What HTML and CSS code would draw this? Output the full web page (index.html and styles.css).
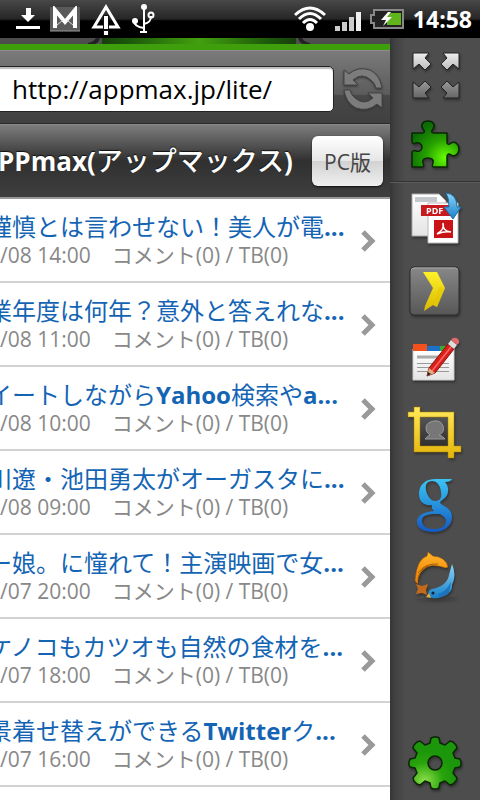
FILE: index.html
```html
<!DOCTYPE html>
<html lang="ja">
<head>
<meta charset="utf-8">
<meta name="viewport" content="width=device-width, initial-scale=1">
<title>APPmax</title>
<link rel="stylesheet" href="styles.css">
</head>
<body>
<svg class="defs" width="0" height="0" aria-hidden="true">
  <defs>
    <linearGradient id="silver" x1="0" y1="0" x2="0" y2="1"><stop offset="0" stop-color="#eee"/><stop offset="1" stop-color="#bbb"/></linearGradient>
    <linearGradient id="steel" x1="0" y1="0" x2="0" y2="1"><stop offset="0" stop-color="#666"/><stop offset="1" stop-color="#999"/></linearGradient>
    <radialGradient id="leaf" cx=".7" cy=".8" r=".8"><stop offset="0" stop-color="#6f0"/><stop offset=".5" stop-color="#27a000"/><stop offset="1" stop-color="#0b6b05"/></radialGradient>
    <radialGradient id="gear" cx=".3" cy=".85" r=".6"><stop offset="0" stop-color="#8ee04a"/><stop offset=".6" stop-color="#28a30c"/><stop offset="1" stop-color="#1c960a"/></radialGradient>
    <linearGradient id="tile" x1="0" y1="0" x2="0" y2="1"><stop offset="0" stop-color="#888"/><stop offset="1" stop-color="#575757"/></linearGradient>
    <linearGradient id="yellow" x1="0" y1="0" x2="0" y2="1"><stop offset="0" stop-color="#fff12a"/><stop offset="1" stop-color="#d9b800"/></linearGradient>
    <linearGradient id="gold" x1="0" y1="0" x2="0" y2="1"><stop offset="0" stop-color="#ffe95a"/><stop offset="1" stop-color="#e3b40c"/></linearGradient>
    <linearGradient id="azure" gradientUnits="userSpaceOnUse" x1="0" y1="0" x2="0" y2="53"><stop offset="0" stop-color="#3cc4f5"/><stop offset=".5" stop-color="#2590dc"/><stop offset="1" stop-color="#1658c0"/></linearGradient>
    <linearGradient id="sky" x1="0" y1="0" x2="0" y2="1"><stop offset="0" stop-color="#8fd4f7"/><stop offset="1" stop-color="#1580c8"/></linearGradient>
    <linearGradient id="amber" x1="0" y1="0" x2="0" y2="1"><stop offset="0" stop-color="#ffb52a"/><stop offset="1" stop-color="#f07c00"/></linearGradient>
    <linearGradient id="paper" x1="0" y1="0" x2="0" y2="1"><stop offset="0" stop-color="#fff"/><stop offset="1" stop-color="#e4e4e4"/></linearGradient>
    <linearGradient id="photo" x1="0" y1="0" x2="0" y2="1"><stop offset="0" stop-color="#555"/><stop offset="1" stop-color="#2e2e2e"/></linearGradient>
  </defs>
</svg>

<header class="status">
  <svg width="24" height="22" viewBox="0 0 24 22"><path fill="#fff" d="M10 0h5v7h4l-7 7-7-7h5zM0 18h24v3H0z"/></svg>
  <svg width="32" height="26" viewBox="0 0 32 26"><rect x="1" y="1" width="30" height="24" fill="#5a5a5a"/><path d="M1 25h30" stroke="#999"/><path d="M6 22V4l10 12L26 4v18" fill="none" stroke="#fff" stroke-width="4"/><path d="M8 19l6-5M24 19l-6-5" stroke="#ddd"/></svg>
  <svg width="32" height="32" viewBox="0 0 32 32"><path d="M16 4 28 24H4z" fill="none" stroke="#fff" stroke-width="3"/><path d="M16 12v20" stroke="#111" stroke-width="6"/><path d="M16 13v13M16 28v4" stroke="#fff" stroke-width="4"/></svg>
  <svg width="24" height="30" viewBox="0 0 24 30"><g fill="none" stroke="#fff" stroke-width="2"><path d="M13 3v24M3 17c0 4 3 6 10 7M20 12c0 5-2 7-7 8"/><circle cx="20" cy="11" r="2.500"/><path d="M9 28h7"/></g><circle cx="13" cy="3" r="3" fill="#fff"/><circle cx="4" cy="17" r="3" fill="#fff"/></svg>
  <svg class="push" width="32" height="26" viewBox="0 0 32 26"><g fill="none" stroke="#fff" stroke-width="3"><path d="M1 9Q16-5 31 9M5 13Q16 2 27 13M9 17Q16 10 23 17"/></g><circle cx="16" cy="21" r="4" fill="#fff"/></svg>
  <svg class="signal" width="26" height="20" viewBox="0 0 26 20"><path fill="#ccc" d="M0 15h5v5H0zM7 11h5v9H7zM14 6h5v14h-5z"/><path fill="#eee" d="M21 1h5v19h-5z"/></svg>
  <svg width="34" height="20" viewBox="0 0 34 20"><path d="M4 1h29v18H4v-5H1V6h3z" fill="#222" stroke="#888" stroke-width="2"/><path d="M17 4h14v12H17z" fill="#5fb51b"/><path d="m18 3-7 8h5l-3 6 9-9h-5l4-5z" fill="#fff"/></svg>
  <time>14:58</time>
</header>

<div class="screen">
  <main class="page">
    <div class="glow"><svg width="14" height="6" viewBox="0 0 14 6"><path d="M0 6Q7 5 9 0M5 6q5-2 6-6" fill="none" stroke="#222" stroke-width="2"/></svg><span></span><svg width="14" height="6" viewBox="0 0 14 6"><path d="M14 6Q7 5 5 0M9 6Q4 4 3 0" fill="none" stroke="#222" stroke-width="2"/></svg></div>
    <form class="address">
      <input type="text" aria-label="URL" value="http://appmax.jp/lite/">
      <button type="button" class="reload" aria-label="再読み込み">
        <svg width="42" height="42" viewBox="0 0 42 42"><g fill="#7c7c7c" stroke="#444"><path d="M2 2v15h14l-5-5q9-8 18 0 4 3 5 8h6Q38 7 28 2 16-2 7 6z"/><path d="M40 40V25H26l5 5q-9 8-18 0-4-3-5-8H2q2 13 12 18 12 4 21-4z"/></g></svg>
      </button>
    </form>
    <div class="title">
      <h1>PPmax(<span class="kana">アップマックス</span>)</h1>
      <button type="button" class="pc">PC版</button>
    </div>
    <ul class="list">
      <li><a href="#"><span class="text"><span class="name">謹慎とは言わせない！美人が電<b>...</b></span><span class="meta">/08 14:00　コメント(0) / TB(0)</span></span><svg width="16" height="24" viewBox="0 0 16 24"><path d="m3 3 9 9-9 9"/></svg></a></li>
      <li><a href="#"><span class="text"><span class="name">業年度は何年？意外と答えれな<b>...</b></span><span class="meta">/08 11:00　コメント(0) / TB(0)</span></span><svg width="16" height="24" viewBox="0 0 16 24"><path d="m3 3 9 9-9 9"/></svg></a></li>
      <li><a href="#"><span class="text"><span class="name">イートしながら<b>Yahoo</b>検索や<b>a...</b></span><span class="meta">/08 10:00　コメント(0) / TB(0)</span></span><svg width="16" height="24" viewBox="0 0 16 24"><path d="m3 3 9 9-9 9"/></svg></a></li>
      <li><a href="#"><span class="text"><span class="name">川遼・池田勇太がオーガスタに<b>...</b></span><span class="meta">/08 09:00　コメント(0) / TB(0)</span></span><svg width="16" height="24" viewBox="0 0 16 24"><path d="m3 3 9 9-9 9"/></svg></a></li>
      <li><a href="#"><span class="text"><span class="name">ー娘。に憧れて！主演映画で女<b>...</b></span><span class="meta">/07 20:00　コメント(0) / TB(0)</span></span><svg width="16" height="24" viewBox="0 0 16 24"><path d="m3 3 9 9-9 9"/></svg></a></li>
      <li><a href="#"><span class="text"><span class="name">ケノコもカツオも自然の食材を<b>...</b></span><span class="meta">/07 18:00　コメント(0) / TB(0)</span></span><svg width="16" height="24" viewBox="0 0 16 24"><path d="m3 3 9 9-9 9"/></svg></a></li>
      <li><a href="#"><span class="text"><span class="name">景着せ替えができる<b>Twitter</b>ク<b>...</b></span><span class="meta">/07 16:00　コメント(0) / TB(0)</span></span><svg width="16" height="24" viewBox="0 0 16 24"><path d="m3 3 9 9-9 9"/></svg></a></li>
    </ul>
  </main>

  <aside class="tools">
    <div class="group top">
      <button type="button" aria-label="全画面">
        <svg viewBox="0 0 54 54"><g stroke="#222" stroke-linejoin="round"><path fill="url(#silver)" d="M5 4h16l-4 5 6 6-6 6-6-6-6 5z"/><path fill="url(#silver)" transform="translate(56 0) scale(-1 1)" d="M5 4h16l-4 5 6 6-6 6-6-6-6 5z"/><path fill="url(#steel)" transform="translate(0 53) scale(1 -1)" d="M5 4h16l-4 5 6 6-6 6-6-6-6 5z"/><path fill="url(#steel)" transform="translate(56 53) scale(-1 -1)" d="M5 4h16l-4 5 6 6-6 6-6-6-6 5z"/></g></svg>
      </button>
      <button type="button" aria-label="アドオン">
        <svg viewBox="0 0 54 54"><path fill="url(#leaf)" stroke="#0a2605" stroke-width="1.500" stroke-linejoin="round" d="M4 15h10c3 0 3-2 1-4-3-4 0-8 5-8s8 4 5 8c-2 2-2 4 1 4h13v9c0 3 2 3 4 1 4-2 8 1 8 6s-4 8-8 6c-2-2-4-1-4 2v10H26c-2 0-2-2-1-4 1-3-1-5-5-5s-6 2-5 5c1 2 1 4-1 4H4V35c0-2 2-3 4-2 4 1 6-1 6-4s-3-5-6-4c-2 1-4 1-4-2z"/></svg>
      </button>
    </div>
    <div class="group">
      <button type="button" aria-label="PDF">
        <svg viewBox="0 0 54 54"><path d="M4 3h27l7 7v35H4z" fill="url(#paper)" stroke="#aaa"/><path d="M7 6h22v5H7z" fill="#c4c8cc"/><path d="M20 12h30v40H20z" fill="#fff" stroke="#bbb"/><path d="M13 14h30v11H13z" fill="#c81a1e"/><text x="18" y="23" class="tiny">PDF</text><path d="M26 29h19v18H26z" fill="#c91317"/><path d="M29 43q8-5 6-11-1 8 8 9-7-1-14 2z" fill="none" stroke="#fff" stroke-width="1.500"/><path d="M38 2q11 1 11 14h4l-8 12-9-12h5q0-9-3-14z" fill="url(#sky)" stroke="#1672ad"/></svg>
      </button>
      <button type="button" aria-label="進む">
        <svg viewBox="0 0 54 54"><rect x="2" y="4" width="49" height="48" rx="4" fill="url(#tile)" stroke="#2d2d2d"/><path d="M3 7q1-2 4-2h40q2 0 3 2" fill="none" stroke="#aaa"/><path d="M15 9h14l8 16-8 19-4-2-9 6 1-5 8-18z" fill="url(#yellow)"/><path d="m31 24 6 1-8 19-4-2z" fill="#e4c500" opacity=".5"/></svg>
      </button>
      <button type="button" aria-label="メモ">
        <svg viewBox="0 0 54 54"><path d="M5 14h41v31H5z" fill="url(#paper)" stroke="#ccc"/><path d="M5 9h14v7H5z" fill="#f2511b"/><path d="M19 11h13v5H19z" fill="#1d70c8"/><path d="M32 11h8v5h-8z" fill="#3caa28"/><path d="M9 22h29" stroke="#aaa" stroke-width="3"/><path d="M9 28.500h32M9 32.500h32M9 36.500h32" stroke="#999"/><path d="m19 41 2-8 19-24 6 5-19 24z" fill="#d8201a" stroke="#8a0d0a"/><path d="m24 36 19-24" stroke="#f66" stroke-width="1.500"/><path d="m19 41 2-8 6 5z" fill="#e0b080"/><path d="m19 41 1-4 3 2z" fill="#222"/><path d="m40 9 3-4 6 5-3 4z" fill="#ddd"/><path d="m43 5 2-2q3-1 5 1t1 4l-2 2z" fill="#e06a6a"/></svg>
      </button>
      <button type="button" aria-label="切り抜き">
        <svg viewBox="0 0 54 54"><path d="M11 9h30v31H11z" fill="url(#photo)"/><path d="M17 32q2-3 5-4-5-3-4-8t8-6 9 5-4 9q4 1 6 4z" fill="#777" stroke="#999"/><path fill="url(#gold)" fill-rule="evenodd" stroke="#a98300" stroke-width=".5" d="M6 0h6v5h34v34h7v6h-7v6h-6v-6H6V10H0V5h6zM12 10v29h28V10z"/></svg>
      </button>
      <button type="button" aria-label="Google">
        <svg viewBox="0 0 54 54"><path fill="url(#azure)" fill-rule="evenodd" d="M44 0c-1 2-3 3-7 3q4 4 3 9c0 5-4 8-7 10-2 2 0 3 3 5 4 2 8 5 8 11 0 9-8 15-19 15-10 0-16-4-16-10 0-7 7-10 17-11q-3-2-2-6c-9 1-13-4-13-11C11 6 17 0 28 0zM24 2c-5 0-7 4-6 9 1 6 5 11 9 11 5 0 7-3 6-9-1-7-4-11-9-11zm3 33c-9 0-13 2-13 7s5 8 12 8 12-3 12-8c0-3-3-5-6-7z"/></svg>
      </button>
      <button type="button" aria-label="Dolphin">
        <svg viewBox="0 0 54 54"><path d="M5 49q26-5 46-3-15 5-32 3z" fill="#3d3d3d" opacity=".5"/><path d="M7 29Q9 8 19 5l1-4 5 4q13 1 15 11l-2 1Q22 11 15 19q-6 5-5 14-3-2-3-4z" fill="url(#amber)" stroke="#9c5500" stroke-width=".5"/><path d="M10 22q7-10 20-9M10 27q3-10 10-12" fill="none" stroke="#a65e00"/><path d="m8 33 6 2 6-2-2 6 1 5-5-2-6 1 2-5z" fill="#c26a1c"/><path d="M44 13q5 11 0 21 1 7-8 11-9 4-14 1-4-6 2-8 15-3 17-14z" fill="url(#sky)"/><path d="M30 43q8-2 13-12-1 8-3 12-4 3-9 3z" fill="#1c74bd"/><circle cx="25" cy="42" r="1.500" fill="#123"/><path d="m21 42-3 4 5 1z" fill="#e2b23c"/></svg>
      </button>
    </div>
    <button type="button" class="settings" aria-label="設定">
      <svg viewBox="0 0 54 54"><path fill="url(#gear)" fill-rule="evenodd" stroke="#0c2506" stroke-width="1.500" stroke-linejoin="round" d="m22 7 1-5 3-1h3l2 1 1 5 5 2 5-4 3 1 3 3 1 3-4 5 2 5 5 1 1 3v3l-1 2-5 1-2 5 4 5-1 3-3 3-3 1-5-4-5 2-1 5-2 1h-3l-3-1-1-5-5-2-5 4-3-1-3-3-1-3 4-5-2-5-5-1-1-2v-3l1-3 5-1 2-5-4-5 1-3 3-3 3-1 5 4zM27 20a7 7 0 1 0 0 14 7 7 0 0 0 0-14z"/></svg>
    </button>
  </aside>
</div>
</body>
</html>
```
FILE: styles.css
```css
* { box-sizing: border-box; }

body {
  margin: 0;
  height: 100vh;
  display: flex;
  flex-direction: column;
  overflow: hidden;
  background: #4d4d4d;
  font-family: "Open Sans", "Noto Sans CJK JP", sans-serif;
}

svg { display: block; flex: none; }
.defs { position: absolute; }
button { padding: 0; border: 0; background: none; }

.status {
  flex: none;
  height: 38px;
  display: flex;
  align-items: center;
  gap: 9px;
  padding: 0 8px 0 16px;
  background: linear-gradient(#484848, #262626 50%, #000 55%, #000);
  color: #fff;
}
.status .push { margin-left: auto; }
.status .signal { align-self: flex-end; margin-bottom: 7px; }
.status time { font-size: 23px; font-weight: 700; line-height: 38px; }

.screen { flex: 1; min-height: 0; display: flex; }

.page { flex: 1; min-width: 0; overflow: hidden; background: #fff; }

.glow {
  display: flex;
  padding-left: 88px;
  background: #4d4d4d;
  border-bottom: 6px solid #3f9e0c;
  height: 12px;
}
.glow span {
  width: 194px;
  background: linear-gradient(90deg, #173f0c, #1c5a0b 15%, #44a00e 50%, #1c5a0b 85%, #173f0c);
}

.address {
  display: flex;
  align-items: center;
  gap: 8px;
  height: 74px;
  padding: 4px 6px 0 0;
  background: linear-gradient(#7a7a7a, #5c5c5c 60%, #484848 62%, #404040);
  border-top: 1px solid #8c8c8c;
  border-bottom: 1px solid #2b2b2b;
}
.address input {
  flex: 1;
  min-width: 0;
  height: 46px;
  margin-left: -8px;
  padding: 0 8px 0 19px;
  border: 1px solid #222;
  border-radius: 5px;
  background: #fff;
  box-shadow: inset 0 2px 1px #bbb;
  font: 26px/44px "Open Sans", sans-serif;
  color: #000;
}
.address .reload { filter: drop-shadow(0 1px 1px #333); }

.title {
  display: flex;
  align-items: center;
  justify-content: space-between;
  height: 75px;
  padding-right: 7px;
  background: linear-gradient(#7d7d7d, #303030 50%, #3f3f3f);
  border-top: 1px solid #888;
  border-bottom: 2px solid #999;
}
.title h1 {
  margin: 0 0 0 -2px;
  font-size: 26px;
  line-height: 40px;
  font-weight: 700;
  color: #fff;
  text-shadow: 0 -1px 1px #111;
  white-space: nowrap;
}
.title .kana { font-size: 27px; font-weight: 500; }
.title .pc {
  width: 71px;
  height: 50px;
  border-radius: 6px;
  background: linear-gradient(#fff, #e6e6e6 50%, #d2d2d2 51%, #efefef);
  box-shadow: 0 1px 2px #111;
  font: 21px "Open Sans", "Noto Sans CJK JP", sans-serif;
  color: #444;
}

.list { margin: 0; padding: 0; list-style: none; }
.list li { border-bottom: 2px solid #d2d2d2; }
.list a {
  display: flex;
  align-items: center;
  justify-content: space-between;
  height: 82px;
  padding: 2px 14px 0 0;
  text-decoration: none;
  white-space: nowrap;
}
.name, .meta { display: block; line-height: 28px; }
.name { margin-left: -12px; font-size: 24px; color: #1464b4; }
.meta { font-size: 21px; color: #888; }
.list path { fill: none; stroke: #999; stroke-width: 5; }

.tools {
  flex: none;
  width: 90px;
  display: flex;
  flex-direction: column;
  align-items: center;
  padding-bottom: 10px;
  background: linear-gradient(90deg, #353535, #424242 5px, #4d4d4d 16px);
}
.tools button, .tools svg { width: 54px; height: 54px; overflow: visible; }
.tools svg { filter: drop-shadow(1px 2px 1px #333); }
.group {
  align-self: stretch;
  display: flex;
  flex-direction: column;
  align-items: center;
  gap: 18px;
  padding-top: 9px;
}
.top {
  gap: 15px;
  padding: 11px 0 9px;
  border-bottom: 1px solid #333;
  box-shadow: 0 1px #5c5c5c;
}
.settings { margin-top: auto; }
.tiny { font: 700 9px "Open Sans", sans-serif; fill: #fff; }
```
